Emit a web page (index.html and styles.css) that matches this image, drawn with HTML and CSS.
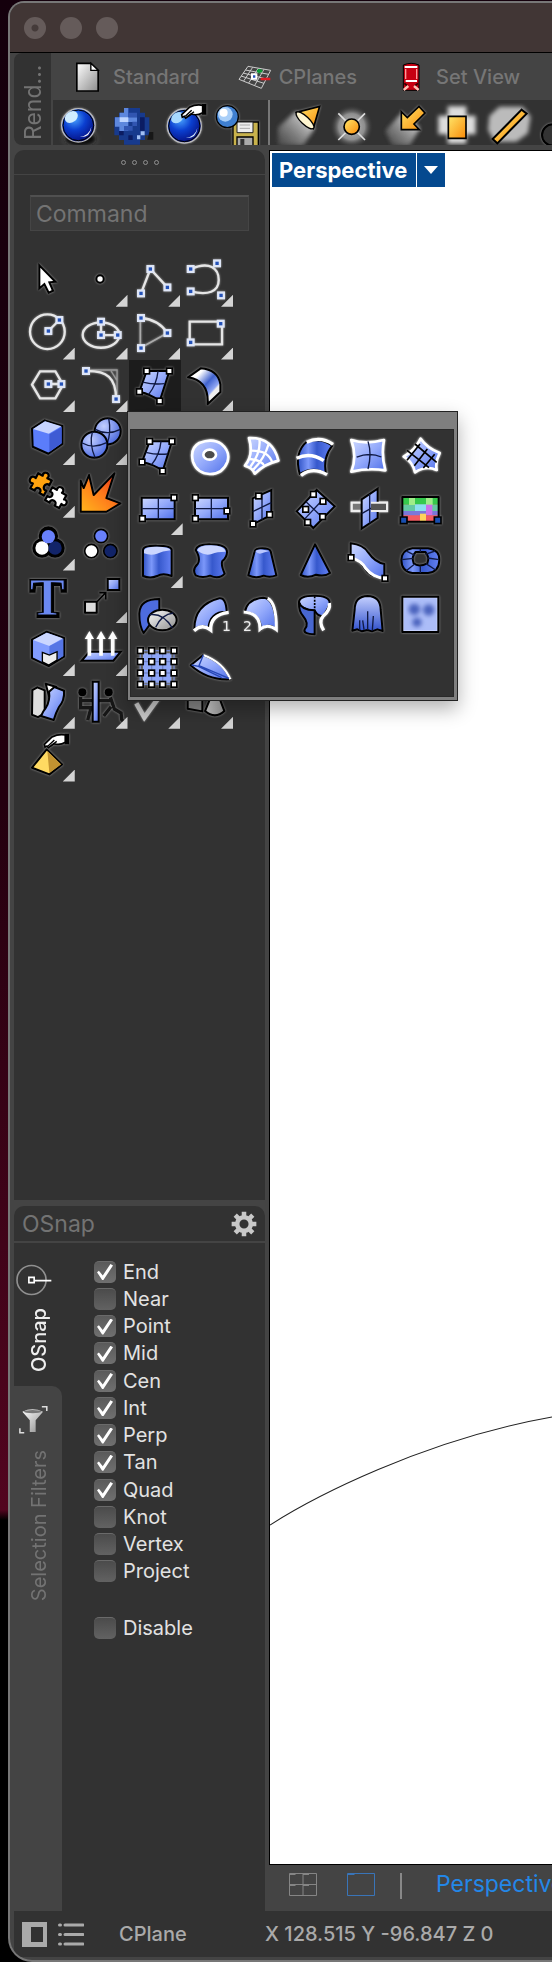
FILE: index.html
```html
<!DOCTYPE html>
<html lang="en">
<head>
<meta charset="utf-8">
<title>Perspective</title>
<link rel="stylesheet" href="styles.css">
</head>
<body>
<svg class="defs" aria-hidden="true">
<defs>
<linearGradient id="bl" x1="0" y1="0" x2="1" y2="1"><stop offset="0" stop-color="#cdd8ff"/><stop offset=".5" stop-color="#93a9fb"/><stop offset="1" stop-color="#4f6fe8"/></linearGradient>
<linearGradient id="side" x1="0" y1="0" x2="1" y2="0"><stop offset="0" stop-color="#2f52c4"/><stop offset=".3" stop-color="#7c98fa"/><stop offset=".55" stop-color="#3658cc"/><stop offset="1" stop-color="#6481f4"/></linearGradient>
<linearGradient id="down" x1="0" y1="0" x2="0" y2="1"><stop offset="0" stop-color="#c6d1ff"/><stop offset="1" stop-color="#2f50cc"/></linearGradient>
<linearGradient id="shell" x1="0" y1="0" x2="1" y2="1"><stop offset=".25" stop-color="#fff"/><stop offset=".5" stop-color="#3f62cf"/><stop offset=".68" stop-color="#8fa6f4"/><stop offset=".72" stop-color="#eee"/></linearGradient>
<linearGradient id="gr" x1="0" y1="0" x2="1" y2="1"><stop offset="0" stop-color="#fff"/><stop offset="1" stop-color="#8c8c8c"/></linearGradient>
<linearGradient id="or" x1="0" y1="0" x2="1" y2="1"><stop offset="0" stop-color="#ffe66a"/><stop offset="1" stop-color="#f98a08"/></linearGradient>
<linearGradient id="fire" x1="0" y1="1" x2="1" y2="0"><stop offset="0" stop-color="#ffb61c"/><stop offset=".5" stop-color="#ff7c1c"/><stop offset="1" stop-color="#e52c1c"/></linearGradient>
<radialGradient id="ball" cx=".38" cy=".3" r=".75"><stop offset="0" stop-color="#4aa4ff"/><stop offset=".45" stop-color="#0b3fd0"/><stop offset="1" stop-color="#050a78"/></radialGradient>
<radialGradient id="sph" cx=".35" cy=".3" r=".8"><stop offset="0" stop-color="#c2cfff"/><stop offset="1" stop-color="#4565e2"/></radialGradient>
<radialGradient id="lit"><stop offset="0" stop-color="#fff"/><stop offset=".6" stop-color="#b5b5b5"/><stop offset="1" stop-color="#323232" stop-opacity="0"/></radialGradient>
<linearGradient id="beam" x1="1" y1="0" x2="0" y2="1"><stop offset="0" stop-color="#fff"/><stop offset="1" stop-color="#444" stop-opacity=".3"/></linearGradient>
<filter id="soft"><feGaussianBlur stdDeviation="6"/></filter>
<g id="h"><path fill="#dfe6f7" d="M-12-12h24v24h-24z"/><path fill="#2452b8" d="M-5-5H5V5H-5z"/></g>
<g id="b"><path fill="#000" d="M-11-11h22v22h-22z"/><path fill="#fff" d="M-6-6H6V6H-6z"/></g>
<g id="hand"><path d="M-39 14L-16-8Q4-18 24-14V8Q6 18-10 12L-27 24l-4-5-6 3z" fill="#fff" stroke="#000" stroke-width="5"/><path d="M-28 19L-9 1M-20 19L-2 5M24-16h9v28h-9z" stroke="#000" stroke-width="4"/></g>
<path id="puz" d="M-22-20H-8C-14-36 14-36 8-20H22V-7C37-13 37 13 22 7V20H8C12 6-12 6-8 20H-22V7C-8 11-8-11-22-7Z"/>
</defs>
</svg>
<div class="window">
<header class="titlebar"><span class="light close"></span><span class="light"></span><span class="light"></span></header>
<div class="toolbars">
<button class="render-tab">Rend...</button>
<div class="bars">
<nav class="tabs">
<button class="tab"><svg class="doc" viewBox="226 170 74 96"><path d="M231 177h42l22 21v62h-64z" fill="url(#gr)" stroke="#000" stroke-width="5"/><path d="M273 177v21h22z" fill="#fff" stroke="#000" stroke-width="4"/></svg>Standard</button>
<button class="tab"><svg class="plane" viewBox="708 190 102 78"><path d="M738 197L806 209 778 263 711 236Z" fill="#444"/><path d="M738 197L806 209 778 263 711 236ZM752 200L725 241M769 203L740 247M786 206L758 254M730 208L800 221M723 217L793 235M717 226L786 248" fill="none" stroke="#ccc" stroke-width="3"/><path d="M765 211h16M772 205v13" stroke="#0a9a35" stroke-width="7"/><path d="M776 235h29" stroke="#e01b24" stroke-width="8"/><path d="M747 218h19v19h-19z" fill="#fff"/><path d="M753 224h7v7h-7z" fill="#2452b8"/></svg>CPlanes</button>
<button class="tab"><svg class="car" viewBox="92 174 60 90"><path d="M99 183q23-10 47 0v76H99z" fill="#c70012" stroke="#000" stroke-width="3"/><path d="M103 189h38M106 231h34" stroke="#fff" stroke-width="6"/><path d="M106 195v30M139 195v30" stroke="#f99" stroke-width="4"/><path d="M102 238l10 8M143 238l-10 8" stroke="#300" stroke-width="5"/><path d="M100 258l14-12M145 258l-14-12" stroke="#ffc2b5" stroke-width="7"/></svg>Set View</button>
<span class="more">⋮</span>
</nav>
<div class="tools">
<button class="tool" aria-label="Render"><svg viewBox="159 297 159 135"><ellipse cx="241" cy="414" rx="50" ry="25" fill="#080808" filter="url(#soft)"/><circle cx="235" cy="373" r="50" fill="url(#ball)" stroke="#bbb" stroke-width="4"/><circle cx="235" cy="373" r="46" fill="none" stroke="#000" stroke-width="3"/><ellipse cx="214" cy="348" rx="21" ry="16" fill="#d0edff" transform="rotate(-35 214 348)"/><path d="M240 408q28-5 34-30-2 31-34 30z" fill="#fff"/></svg></button>
<button class="tool" aria-label="Preview"><svg class="plain" viewBox="318 297 159 135"><path d="M372 321h48v14h15v14h13v54h-13v14h-15v14h-48v-14h-15v-14h-14v-54h14v-14h15z" fill="#173a8d"/><path d="M359 335h13v-14h13v28h26v14h-26v27h-27v-13h-13v-28h14z" fill="#5d87dd"/><path d="M359 349h26v14h-26z" fill="#bdd4ff"/><path d="M384 335h27v14h-27zM372 375h26v14h-26zM397 362h14v13h-14z" fill="#3155b1"/><path d="M420 349h14v40h-14zM385 403h13v14h-13zM357 390h14v13h-14z" fill="#0b1c62"/><path d="M411 403h10v12h-10zM422 391h12v12h-12z" fill="#a1bff3"/><path d="M448 393h12v23h-18z" fill="#171717"/></svg></button>
<button class="tool" aria-label="Render window"><svg viewBox="477 297 159 135"><circle cx="553" cy="375" r="51" fill="url(#ball)" stroke="#bbb" stroke-width="4"/><circle cx="553" cy="375" r="47" fill="none" stroke="#000" stroke-width="3"/><ellipse cx="532" cy="350" rx="20" ry="15" fill="#a8d9ff" transform="rotate(-35 532 350)"/><path d="M558 411q28-5 34-30-2 31-34 30z" fill="#d9efff"/><use href="#hand" x="584" y="327"/></svg></button>
<button class="tool" aria-label="Save render"><svg viewBox="636 297 159 135"><path d="M699 363h76v75h-76z" fill="#c8b24c" stroke="#000" stroke-width="4"/><path d="M711 363h48v32h-48z" fill="#eee" stroke="#222" stroke-width="3"/><path d="M719 372h31M719 382h31" stroke="#aaa" stroke-width="3"/><path d="M711 408h48v30h-48z" fill="#aaa" stroke="#000" stroke-width="4"/><path d="M721 414h12v20h-12z" fill="#333"/><circle cx="682" cy="347" r="33" fill="#3f7fd0" stroke="#000" stroke-width="4"/><circle cx="676" cy="340" r="22" fill="#a9cff8"/><circle cx="671" cy="335" r="12" fill="#fff"/></svg></button>
<span class="sep"></span>
<button class="tool" aria-label="Spotlight"><svg viewBox="-6 297 159 135"><path d="M60 333L114 382 80 432H8V380Z" fill="url(#beam)" filter="url(#soft)"/><path d="M61 334L131 316 112 382Z" fill="url(#or)" stroke="#000" stroke-width="5"/><ellipse cx="87" cy="358" rx="35" ry="12" transform="rotate(43 87 358)" fill="#fff6d0" stroke="#000" stroke-width="4"/></svg></button>
<button class="tool" aria-label="Point light"><svg class="plain" viewBox="153 297 159 135"><circle cx="227" cy="377" r="65" fill="url(#lit)" opacity=".7"/><path d="M187 337l80 80M267 337l-80 80" stroke="#ddd" stroke-width="5"/><circle cx="227" cy="377" r="23" fill="url(#or)" stroke="#000" stroke-width="5"/></svg></button>
<button class="tool" aria-label="Directional light"><svg viewBox="312 297 159 135"><path d="M376 340L330 390 350 432H400L430 380Z" fill="url(#beam)" filter="url(#soft)"/><path d="M376 332v54h54l-16-17 33-33-18-20-35 34z" fill="url(#or)" stroke="#000" stroke-width="5"/></svg></button>
<button class="tool" aria-label="Rectangular light"><svg class="plain" viewBox="471 297 159 135"><path d="M515 316h56v112h-56zM487 344h112v56H487z" fill="#ddd" filter="url(#soft)"/><path d="M517 346h53v66h-53z" fill="url(#or)" stroke="#000" stroke-width="5"/></svg></button>
<button class="tool" aria-label="Linear light"><svg class="plain" viewBox="630 297 159 135"><path d="M640 345l30-28h70l24 30-8 50-35 25h-65l-20-35z" fill="#bbb" filter="url(#soft)"/><path d="M737 326l15 12-88 89-14-13z" fill="url(#or)" stroke="#000" stroke-width="6"/></svg></button>
<button class="tool" aria-label="Environment"><svg viewBox="789 297 159 135"><circle cx="830" cy="402" r="32" fill="#333" stroke="#000" stroke-width="6"/></svg></button>
</div>
</div>
</div>
<main class="main">
<aside class="sidebar">
<section class="toolbox">
<div class="grip"><i></i><i></i><i></i><i></i></div>
<input class="command" type="text" placeholder="Command" aria-label="Command">
<div class="palette">
<button class="cell" aria-label="Select"><svg viewBox="69 42 158 158"><path d="M118 76v69l15-13 13 26 13-6-11-25 18-2z" fill="#fff" stroke="#000" stroke-width="6"/></svg></button>
<button class="cell more-tools" aria-label="Point"><svg viewBox="227 42 158 158"><circle cx="299" cy="117" r="11" fill="#fff" stroke="#000" stroke-width="6"/></svg></button>
<button class="cell more-tools" aria-label="Polyline"><svg viewBox="385 42 158 158"><path class="line" d="M421 160L449 87 500 142"/><use href="#h" x="421" y="160"/><use href="#h" x="449" y="87"/><use href="#h" x="500" y="142"/></svg></button>
<button class="cell more-tools" aria-label="Curve"><svg viewBox="544 42 158 158"><path class="line" d="M573 87C630 62 657 85 657 120S625 167 573 154"/><use href="#h" x="573" y="87"/><use href="#h" x="652" y="70"/><use href="#h" x="573" y="154"/><use href="#h" x="664" y="166"/></svg></button>
<button class="cell more-tools" aria-label="Circle"><svg viewBox="69 200 158 158"><circle class="line" cx="142" cy="274" r="52"/><path class="line" d="M145 272l33-33"/><use href="#h" x="145" y="272"/><use href="#h" x="178" y="239"/></svg></button>
<button class="cell more-tools" aria-label="Ellipse"><svg viewBox="227 200 158 158"><ellipse class="line" cx="302" cy="284" rx="55" ry="38"/><path class="line" d="M302 244v40h50"/><use href="#h" x="302" y="244"/><use href="#h" x="302" y="284"/><use href="#h" x="352" y="284"/></svg></button>
<button class="cell more-tools" aria-label="Arc"><svg viewBox="385 200 158 158"><path d="M500 278l-81 45v-90" fill="none" stroke="#aaa" stroke-width="5"/><path class="line" d="M421 233Q474 238 500 278"/><use href="#h" x="421" y="233"/><use href="#h" x="421" y="323"/><use href="#h" x="500" y="278"/></svg></button>
<button class="cell more-tools" aria-label="Rectangle"><svg viewBox="544 200 158 158"><path class="line" d="M570 244h97v68h-97z"/><use href="#h" x="663" y="250"/><use href="#h" x="573" y="306"/></svg></button>
<button class="cell more-tools" aria-label="Polygon"><svg viewBox="69 358 158 158"><path class="line" d="M96 432l24-40h46l23 40-23 41h-46zM145 430h39"/><use href="#h" x="145" y="430"/><use href="#h" x="184" y="430"/></svg></button>
<button class="cell more-tools" aria-label="Fillet"><svg viewBox="227 358 158 158"><path d="M257 388h93v87M332 391l17 27" fill="none" stroke="#999" stroke-width="4"/><path class="line" d="M257 391C320 390 347 410 347 475"/><use href="#h" x="257" y="391"/><use href="#h" x="347" y="475"/></svg></button>
<button class="cell active" aria-label="Surface"><svg viewBox="385 358 158 158"><path class="blue" d="M438 391h68l-29 90q-25-20-61-28z"/><path class="thin" d="M472 391q-4 40-28 70M426 424q30 8 66 5"/><use href="#b" x="438" y="391"/><use href="#b" x="506" y="391"/><use href="#b" x="477" y="481"/><use href="#b" x="416" y="453"/></svg></button>
<button class="cell more-tools" aria-label="Extrude surface"><svg viewBox="544 358 158 158"><path class="k" fill="url(#shell)" d="M565 410l38-27q52 4 59 48v23l-38 36q4-70-59-80z"/></svg></button>
<button class="cell more-tools" aria-label="Box"><svg viewBox="69 516 158 158"><path class="k" fill="#5b7dfa" d="M96 566l38-25 53 17v54l-42 29-47-21z"/><path d="M99 567l36-23 49 15-38 22z" fill="#c7d4ff"/><path d="M148 583l37-22v48l-37 27z" fill="#3e5bd4"/></svg></button>
<button class="cell more-tools" aria-label="Solids"><svg viewBox="227 516 158 158"><circle cx="322" cy="574" r="39" fill="url(#sph)" class="k"/><path class="thin" d="M285 568q35 20 75 0M325 535q8 40-5 78"/><circle cx="282" cy="614" r="39" fill="url(#sph)" class="k"/><path class="thin" d="M244 608q35 20 75 0M276 576q-10 35 8 76"/></svg></button>
<button class="cell more-tools row-start" aria-label="Explode blocks"><svg viewBox="69 675 158 158"><use href="#puz" class="k" fill="#ffa30f" transform="translate(123 733) rotate(-62) scale(1.15)"/><use href="#puz" class="k" fill="#fff" transform="translate(167 773) rotate(30) scale(1.1)"/></svg></button>
<button class="cell" aria-label="Explode"><svg viewBox="227 675 158 158"><path class="k" fill="url(#fire)" d="M241 722l9 22 16-39 14 60 62-65-24 74 42 16-42 25h-77z"/></svg></button>
<button class="cell more-tools row-start" aria-label="Union"><svg viewBox="69 53 158 158"><g stroke="#000" stroke-width="18"><circle cx="145" cy="107" r="20"/><circle cx="126" cy="143" r="20"/><circle cx="165" cy="143" r="20"/></g><circle cx="126" cy="143" r="20" fill="#fff"/><circle cx="165" cy="143" r="20" fill="#122469"/><circle cx="145" cy="109" r="20" fill="#6880fb"/></svg></button>
<button class="cell" aria-label="Group"><svg viewBox="227 53 158 158"><g stroke="#000" stroke-width="5"><circle cx="302" cy="107" r="20" fill="#6880fb"/><circle cx="273" cy="152" r="20" fill="#fff"/><circle cx="330" cy="152" r="20" fill="#122469"/></g></svg></button>
<button class="cell row-start" aria-label="Text"><svg viewBox="69 211 158 158"><text class="glyph back" x="144" y="345">T</text><text class="glyph" x="142" y="343">T</text></svg></button>
<button class="cell more-tools" aria-label="Scale"><svg viewBox="227 211 158 158"><path class="k" fill="#ddd" d="M254 303h35v33h-35z"/><path class="blue" d="M322 235h35v33h-35z"/><path d="M290 303l25-26M297 276h19v20" fill="none" stroke="#000" stroke-width="5"/></svg></button>
<button class="cell more-tools row-start" aria-label="Solid edit"><svg viewBox="69 370 158 158"><path class="k" fill="#829dff" d="M96 420l44-24 52 19v56l-46 28-50-24z"/><path d="M99 421l41-22 48 17-40 23z" fill="#cbd6ff"/><path d="M148 439l42-22v52l-42 27z" fill="#5575e5"/><path d="M127 458l21 8 23-10v25l-25 15-19-10z" fill="#eee" stroke="#000" stroke-width="4"/></svg></button>
<button class="cell more-tools" aria-label="Project"><svg viewBox="227 370 158 158"><path class="blue" d="M244 483l23-27h94l-22 27z"/><path d="M267 468v-56M302 468v-56M337 468v-56" stroke="#fff" stroke-width="11"/><path d="M267 394l14 24h-28zM302 394l14 24h-28zM337 394l14 24h-28z" fill="#fff"/></svg></button>
<button class="cell more-tools row-start" aria-label="Shell"><svg viewBox="69 528 158 158"><path class="k" fill="#fff" d="M137 551l32 10-22 28z"/><path class="k" fill="#ddd" d="M97 570l15-8 22 9v68l-20 12-18-7z"/><path class="k" fill="url(#bl)" d="M147 575l16-14 29 11q2 30-16 50-8 14-15 38l-38-12q5-14 14-24 14-22 10-49z"/></svg></button>
<button class="cell more-tools" aria-label="Mirror"><svg viewBox="227 528 158 158"><path d="M241 590v33h31l-10 37M244 602h90M330 592l12 35 20 12 2 20 10 10M332 620l-22 28" fill="none" stroke="#161616" stroke-width="10"/><circle cx="246" cy="577" r="12"/><circle cx="325" cy="577" r="12"/><path class="blue" d="M277 545h18v120h-18z"/></svg></button>
<button class="cell more-tools" aria-label="Check"><svg viewBox="385 528 158 158"><path d="M407 610l24 42 48-66" fill="none" stroke="#ccc" stroke-width="14"/></svg></button>
<button class="cell more-tools" aria-label="Primitives"><svg viewBox="544 528 158 158"><path class="k" fill="#888" d="M564 580h44v54l-44-8z"/><path class="k" fill="url(#gr)" d="M646 560l28 73q-28 26-58 0z"/></svg></button>
<button class="cell more-tools row-start" aria-label="Render options"><svg viewBox="69 686 158 158"><path class="k" fill="#ffda62" d="M140 747l46 45-38 30-52-20z"/><path d="M142 752l41 40-35 26z" fill="#c29331"/><use href="#hand" x="172" y="718"/></svg></button>
<div class="popup">
<div class="flyout">
<button class="cell" aria-label="Corner points"><svg viewBox="33 270 158 158"><path class="blue" d="M89 304h67l-28 89q-25-20-62-27z"/><path class="thin" d="M123 304q-4 40-28 70M77 337q30 8 66 5"/><use href="#b" x="89" y="304"/><use href="#b" x="156" y="304"/><use href="#b" x="128" y="393"/><use href="#b" x="66" y="366"/></svg></button>
<button class="cell" aria-label="Patch"><svg class="glow" viewBox="191 270 158 158"><path class="wh" fill="url(#bl)" d="M237 309q40-16 66 3 28 23 18 54-15 37-53 36-38-2-50-37-10-40 19-56z"/><ellipse cx="268" cy="344" rx="19" ry="15" fill="#4b4b4b" stroke="#fff" stroke-width="8"/></svg></button>
<button class="cell" aria-label="Curve network"><svg class="glow" viewBox="349 270 158 158"><path class="wh" fill="url(#bl)" d="M388 294q72-2 88 68-40 9-71 39-5-17-29-24 27-32 12-83z"/><path d="M396 332q52 0 62 37M391 357q39 4 44 24M419 294q6 43-27 86M447 312q-13 44-46 77" fill="none" stroke="#fff" stroke-width="7"/></svg></button>
<button class="cell" aria-label="Loft"><svg class="glow" viewBox="-3 90 158 158"><path class="k" fill="url(#side)" d="M50 125q-38 32-21 97 43-26 79 0-10-50 19-85-34-25-77-12z"/><path d="M50 127q40-20 79 6M20 175q40-20 81 7M33 226q35-27 78-2" fill="none" stroke="#fff" stroke-width="10"/></svg></button>
<button class="cell" aria-label="Edge curves"><svg class="glow" viewBox="155 90 158 158"><path class="wh" fill="url(#bl)" d="M183 120q43 14 98 0-9 45 4 91-50-8-102 4 18-43 0-95z"/><path class="thin" d="M233 124q12 37 0 83M199 171q40-15 74 0"/></svg></button>
<button class="cell" aria-label="Drape network"><svg class="glow" viewBox="313 90 158 158"><path class="wh" fill="url(#bl)" d="M393 116q19 28 57 43-14 26-9 51-32-15-65 7-7-32-34-47 35-19 51-54z"/><path d="M352 151l66 52M376 132l65 55M391 132l-39 49M413 147l-39 50M435 163l-34 41" stroke="#000" stroke-width="5"/></svg></button>
<button class="cell more-tools" aria-label="Rectangular plane"><svg viewBox="33 428 158 158"><path class="blue" d="M65 472h99v65H65z"/><path class="thin" d="M115 472v65M65 505h99"/><use href="#b" x="162" y="472"/><use href="#b" x="67" y="535"/></svg></button>
<button class="cell" aria-label="Three point plane"><svg viewBox="191 428 158 158"><path class="blue" d="M224 472h99v65h-99z"/><path class="thin" d="M273 472v65M224 505h99"/><use href="#b" x="225" y="472"/><use href="#b" x="225" y="535"/><use href="#b" x="320" y="512"/></svg></button>
<button class="cell" aria-label="Vertical plane"><svg viewBox="349 428 158 158"><path class="blue" d="M399 474l56-25v75l-56 28z"/><path class="thin" d="M427 463v75M399 514l56-27"/><use href="#b" x="417" y="467"/><use href="#b" x="400" y="551"/><use href="#b" x="450" y="523"/></svg></button>
<button class="cell" aria-label="Plane through points"><svg viewBox="-3 248 158 158"><path class="blue" d="M20 333l60-64 54 49-64 65z"/><path class="thin" d="M48 304l54 52M100 296l-55 59"/><use href="#b" x="70" y="282"/><use href="#b" x="99" y="303"/><use href="#b" x="47" y="327"/><use href="#b" x="98" y="349"/><use href="#b" x="53" y="366"/></svg></button>
<button class="cell" aria-label="Cutting plane"><svg viewBox="155 248 158 158"><path d="M184 307h106v25H184z" fill="#777" stroke="#eee" stroke-width="7"/><path class="blue" d="M214 297l48-32v88l-48 32z"/><path class="thin" d="M238 281v88M214 340l48-27"/><path d="M242 307h48v25h-48" fill="#555" stroke="#eee" stroke-width="6"/></svg></button>
<button class="cell" aria-label="Picture"><svg viewBox="313 248 158 158"><path d="M338 292h109v70H338z" fill="#f25b61"/><path d="M338 292h109v21H338z" fill="#35c94c"/><path d="M338 313h109v19H338z" fill="#64c9a3"/><path d="M338 332h109v13H338z" fill="#7b78d9"/><path d="M358 292h18v22h-18zM409 292h20v22h-20z" fill="#a0ed89"/><path d="M376 312h34v20h-34z" fill="#8ce0f1"/><path d="M409 313h19v31h-19z" fill="#cb70e8"/><path d="M391 340h18v22h-18z" fill="#ffd45c"/><path class="k" fill="none" d="M338 290h109v74H338z"/><path d="M332 350h20v20h-20zM434 350h20v20h-20z" fill="#194fb0" stroke="#000" stroke-width="5"/></svg></button>
<button class="cell more-tools" aria-label="Extrude straight"><svg viewBox="33 46 158 158"><path class="k" fill="url(#side)" d="M69 91q0-14 41-13 45 0 45 13v78q-26-10-44 0-20 9-42 0z"/><path d="M72 92q2-11 39-11t41 11q-25 3-41 10-18 7-39-1z" fill="#cbd6ff"/></svg></button>
<button class="cell" aria-label="Extrude along curve"><svg viewBox="191 46 158 158"><path class="k" fill="url(#side)" d="M226 91q5-18 44-17 50 0 50 23 0 16-14 27-5 11 7 38-16 18-44 6-23 8-43-1-12-17 6-34 10-16-6-42z"/><path d="M230 92q7-15 42-15 41 1 44 19-26 0-42 7-21 7-44-11z" fill="#cbd6ff"/></svg></button>
<button class="cell" aria-label="Extrude tapered"><svg viewBox="349 46 158 158"><path class="k" fill="url(#side)" d="M405 95q2-9 23-9t25 9l17 72q-20 8-38 1-22 10-46-1z"/><path d="M407 94q10-9 43 0-17 4-24 7-10 4-19-7z" fill="#b9c7ff"/></svg></button>
<button class="cell" aria-label="Extrude to point"><svg viewBox="-3 406 158 158"><path class="k" fill="url(#side)" d="M75 434l45 86q-16 12-42 5-24 12-46 1z"/></svg></button>
<button class="cell" aria-label="Ribbon"><svg viewBox="155 406 158 158"><path class="k" fill="url(#bl)" d="M181 431q38 4 53 28 20 29 48 34v42q-42 1-60-30-14-25-41-31z"/><path d="M182 474q31 9 45 33 20 26 56 29" fill="none" stroke="#fff" stroke-width="9"/><use href="#b" x="182" y="474"/><use href="#b" x="284" y="536"/></svg></button>
<button class="cell" aria-label="Revolve"><svg viewBox="313 406 158 158"><path class="k" fill="url(#side)" fill-rule="evenodd" d="M368 446h47q35 5 34 35-1 36-34 39h-47q-32-4-33-39 1-30 33-35zm10 11q-14 15-6 34 15 13 41 0 8-18-6-34z"/><path class="thin" d="M392 447v10M392 498v22M336 480l35-4M414 475l34 5M352 455l24 12M407 464l29-10M350 513l25-20M409 492l29 19"/></svg></button>
<button class="cell" aria-label="Rail revolve"><svg viewBox="33 204 158 158"><path class="k" fill="#4d6cdf" d="M118 237v38l-47 64q-14-23-13-60 2-42 60-42z"/><ellipse class="k" cx="127" cy="300" rx="43" ry="31" fill="url(#gr)"/><path class="thin" d="M90 284q40-5 67 40M160 279q-35 4-53 43"/></svg></button>
<button class="cell" aria-label="Sweep one rail"><svg viewBox="191 204 158 158"><path class="k" fill="url(#bl)" d="M222 327q0-73 75-92 20-3 22 40-50-1-55 50-18-13-42 2z"/><path d="M221 332q25-22 50-2-2-46 54-53" fill="none" stroke="#fff" stroke-width="10"/><text class="num" x="305" y="333">1</text></svg></button>
<button class="cell" aria-label="Sweep two rails"><svg viewBox="349 204 158 158"><path class="k" fill="url(#bl)" d="M375 277q8-40 56-44 37 2 39 96-24-23-46 0-1-49-49-52z"/><path d="M372 276q50 3 49 52 23-19 49 1 1-80-26-94" fill="none" stroke="#fff" stroke-width="9"/><text class="num" x="370" y="333">2</text></svg></button>
<button class="cell" aria-label="Revolve section"><svg viewBox="-3 84 158 158"><path class="k" fill="url(#bl)" d="M27 127q0-20 45-20t47 20q-2 18-20 40-14 4-24-14-45-5-48-26z"/><path class="k" fill="#4867d0" d="M27 127q7 23 47 24v72q-36-1-30-15 15-16-5-40-13-14-12-41z"/><path d="M74 109v42" stroke="#000" stroke-width="5" stroke-dasharray="6 4"/><path d="M118 129q4 20-19 40-14 16 2 42" fill="none" stroke="#fff" stroke-width="10"/></svg></button>
<button class="cell" aria-label="Drape"><svg viewBox="155 84 158 158"><path class="k" fill="url(#down)" d="M193 149q0-40 39-41 38 1 39 41l6 64-16-5-16 6-14-4-16 4-14-6-15 4z"/><path class="thin" d="M208 211v-30M221 209l-4-28M232 209v-55M246 211l3-43"/></svg></button>
<button class="cell" aria-label="Heightfield"><svg viewBox="313 84 158 158"><path class="k" fill="#ccd7ff" d="M338 110h108v106H338z"/><path d="M343 115h98v96h-98z" fill="#acbdf8"/><g fill="#4b64bd" filter="url(#soft)"><circle cx="374" cy="148" r="17"/><circle cx="417" cy="150" r="17"/><circle cx="382" cy="187" r="14"/></g></svg></button>
<button class="cell" aria-label="Point grid"><svg viewBox="33 362 158 158"><path d="M69 399h85v88H69z" fill="#8da5f6"/><path d="M61 391h101v101H61zM95 391v101M128 391v101M61 424h101M61 458h101" fill="none" stroke="#7184c6" stroke-width="4"/><g id="dots"><use href="#b" x="61" y="391"/><use href="#b" x="95" y="391"/><use href="#b" x="128" y="391"/><use href="#b" x="162" y="391"/></g><use href="#dots" y="33"/><use href="#dots" y="67"/><use href="#dots" y="101"/></svg></button>
<button class="cell" aria-label="Developable surface"><svg viewBox="191 362 158 158"><path class="k" fill="url(#bl)" d="M211 435l38-31q60 22 81 73-67 4-119-42z"/><path d="M249 404q60 22 81 73" fill="none" stroke="#fff" stroke-width="7"/><path d="M249 404l-13 32 90 38M214 434l20 4 70 34" fill="none" stroke="#2848b6" stroke-width="4"/></svg></button>
</div>
</div>
</div>
</section>
<section class="osnap">
<div class="osnap-head"><h2>OSnap</h2><button class="gear" aria-label="Settings"><svg viewBox="-40 -40 80 80"><circle r="21" fill="none" stroke="#c8c8c8" stroke-width="14"/><path d="M0-38v14M0 38V24M-38 0h14M38 0H24M-27-27l10 10M27 27L17 17M-27 27l10-10M27-27L17-17" stroke="#c8c8c8" stroke-width="14"/></svg></button></div>
<div class="osnap-body">
<div class="side-tabs">
<button class="side-tab on"><svg viewBox="50 248 112 100"><circle cx="100" cy="298" r="44" fill="none" stroke="#909090" stroke-width="5"/><path d="M92 290h16v16H92zM110 300h50" fill="none" stroke="#fff" stroke-width="5"/></svg><span>OSnap</span></button>
<button class="side-tab off"><svg viewBox="50 10 112 110"><path d="M133 22h16v14M62 92v14h14" fill="none" stroke="#ddd" stroke-width="5"/><path d="M70 38q33-15 67 0l-24 28v38H94V66z" fill="url(#gr)"/><ellipse cx="103" cy="38" rx="28" ry="5" fill="#777"/></svg><span>Selection Filters</span></button>
</div>
<div class="snaps">
<div class="snap-list">
<label><input type="checkbox" checked>End</label>
<label><input type="checkbox">Near</label>
<label><input type="checkbox" checked>Point</label>
<label><input type="checkbox" checked>Mid</label>
<label><input type="checkbox" checked>Cen</label>
<label><input type="checkbox" checked>Int</label>
<label><input type="checkbox" checked>Perp</label>
<label><input type="checkbox" checked>Tan</label>
<label><input type="checkbox" checked>Quad</label>
<label><input type="checkbox">Knot</label>
<label><input type="checkbox">Vertex</label>
<label><input type="checkbox">Project</label>
</div>
<label><input type="checkbox">Disable</label>
</div>
</div>
</section>
</aside>
<section class="view">
<div class="canvas">
<div class="view-title"><button class="view-name">Perspective</button><button class="view-menu" aria-label="Viewport menu"></button></div>
<svg class="arc" viewBox="0 0 281 110" preserveAspectRatio="none"><path d="M0 109C42 82 152 24 281 1" fill="none" stroke="#222"/></svg>
</div>
<div class="view-tabs">
<button aria-label="Four views"><svg viewBox="0 0 28 24"><path d="M.5.5h27v22H.5zM14 .5v22M.5 11.5h27M.5 1.500h6M14 1.500h6M.5 12.500h6M14 12.500h6" fill="none" stroke="#858585"/></svg></button>
<button aria-label="Single view"><svg viewBox="0 0 28 24"><path d="M.5.5h27v22H.5zM.5 1.500h7" fill="none" stroke="#3974b8"/></svg></button>
<span class="bar"></span>
<button class="view-link">Perspective</button>
</div>
</section>
</main>
<footer class="status">
<button aria-label="Toggle sidebar"><svg class="panel-ico" viewBox="0 0 25 25"><path d="M0 0h25v25H0zM9 5v15h12V5z" fill="#aaa" fill-rule="evenodd"/></svg></button>
<button aria-label="List"><svg class="list-ico" viewBox="0 0 26 25"><path d="M7 3h18M7 12.500h18M7 22h18M1.500 3h1M1.500 12.500h1M1.500 22h1" stroke="#aaa" stroke-width="3" stroke-linecap="round"/></svg></button>
<span class="cplane">CPlane</span><span class="coords">X 128.515 Y -96.847 Z 0</span>
</footer>
</div>
</body>
</html>
```
FILE: styles.css
```css
* { box-sizing: border-box; }
body {
  margin: 0;
  min-height: 100vh;
  display: flex;
  padding: 1px 0 0 8px;
  background: linear-gradient(#14000c, #24000f 800px, #52051f 1510px, #000 1520px);
  font-family: Inter, "Liberation Sans", sans-serif;
  font-size: 20px;
  color: #e2e2e2;
  overflow-x: hidden;
}
button { border: 0; padding: 0; margin: 0; background: none; font: inherit; color: inherit; }
svg { display: block; }
.defs { position: absolute; width: 0; height: 0; }
.window {
  flex: 1;
  min-width: 0;
  display: flex;
  flex-direction: column;
  border: 2px solid #777;
  border-right: 0;
  border-radius: 16px 0 0 24px;
  background: #444;
  overflow: hidden;
  padding-bottom: 3px;
}
.titlebar {
  height: 50px;
  display: flex;
  gap: 14px;
  align-items: center;
  padding-left: 14px;
  background: #413635;
  border-bottom: 1px solid #000;
}
.light { width: 22px; height: 22px; border-radius: 50%; background: #655b5a; }
.light.close { background: radial-gradient(circle, #453b3a 3px, #655b5a 4px); }
.toolbars { display: flex; height: 97px; padding-left: 4px; gap: 2px; }
.render-tab {
  flex: none;
  width: 37px;
  height: 92px;
  writing-mode: vertical-rl;
  transform: rotate(180deg);
  background: #323232;
  border-radius: 0 8px 8px 0;
  color: #737373;
  font-size: 23px;
  text-align: left;
  padding-top: 5px;
}
.bars { flex: 1; min-width: 0; height: 92px; overflow: hidden; }
.tabs { display: flex; align-items: center; height: 47px; padding-left: 22px; color: #767676; font-weight: 500; }
.tab { flex: none; display: flex; align-items: center; white-space: nowrap; margin-right: 38px; }
.doc { width: 25px; height: 32px; margin-right: 13px; }
.plane { width: 34px; height: 26px; margin-right: 7px; }
.car { width: 20px; height: 30px; margin: 0 15px 0 6px; }
.more { color: #222; font-size: 22px; }
.tab:nth-child(3) { margin-right: 28px; }
.tools { display: flex; height: 45px; background: #323232; }
.tool { flex: none; width: 53px; height: 45px; }
.tool svg { width: 100%; height: 100%; }
.sep { flex: none; width: 2px; margin: 0 4px 0 3px; background: #777; }
.tool svg, .cell svg { filter: drop-shadow(0 0 1px #999); overflow: visible; }
.tool svg.plain { filter: none; }
.main { flex: 1; display: flex; min-height: 0; }
.sidebar { flex: none; width: 255px; padding-left: 4px; display: flex; flex-direction: column; gap: 6px; position: relative; z-index: 1; }
.toolbox { flex: 1; background: #323232; border-radius: 10px 10px 0 0; }
.grip { height: 25px; display: flex; gap: 6px; justify-content: center; align-items: center; border-bottom: 1px solid #444; }
.grip i { width: 5px; height: 5px; border: 1px solid #909090; border-radius: 50%; }
.command {
  display: block;
  width: calc(100% - 32px);
  height: 36px;
  margin: 20px 16px 23px;
  padding: 0 5px;
  background: #3b3b3b;
  border: 1px solid #454545;
  border-top: 2px solid #505050;
  font: 23px Inter, sans-serif;
  color: #eee;
}
.command::placeholder { color: #737373; opacity: 1; }
.palette { position: relative; width: 211px; margin-left: 9px; display: grid; grid-template-columns: repeat(4, 1fr); }
.cell { display: block; position: relative; aspect-ratio: 1; }
.cell svg { width: 100%; height: 100%; }
.cell .glow { filter: drop-shadow(0 0 1px #eee); }
.row-start { grid-column: 1; }
.active { background: #1c1c1c; }
.more-tools::after {
  content: "";
  position: absolute;
  right: 1px;
  bottom: 0;
  width: 12px;
  height: 12px;
  clip-path: polygon(100% 0, 100% 100%, 0 100%);
  background: #d4d4d4;
}
.k { stroke: #000; stroke-width: 6px; stroke-linejoin: round; }
.wh { stroke: #fff; stroke-width: 8px; stroke-linejoin: round; }
.blue { fill: url(#bl); stroke: #000; stroke-width: 6px; }
.thin { fill: none; stroke: #101a44; stroke-width: 4px; }
.line { fill: none; stroke: #e6e6e6; stroke-width: 7px; }
.glyph { font: bold 158px "Liberation Serif", serif; text-anchor: middle; fill: #6b89f2; stroke: #000; stroke-width: 3px; }
.glyph.back { fill: #2c4cc0; stroke-width: 12px; }
.num { font: 42px "DejaVu Sans", sans-serif; fill: #eee; }
.popup {
  position: absolute;
  left: 104px;
  top: 157px;
  width: 331px;
  padding: 18px 4px 4px 3px;
  border: 1px solid #222;
  background: #7f7f7f;
  box-shadow: 0 8px 18px rgba(0, 0, 0, .3);
}
.flyout { display: grid; grid-template-columns: repeat(6, 1fr); padding: 0 6px 3px 0; background: #323232; outline: 1px solid #292929; }
.osnap { min-height: 705px; display: flex; flex-direction: column; background: #323232; border-radius: 10px 10px 0 0; }
.osnap-head { height: 37px; display: flex; justify-content: space-between; align-items: center; padding: 0 8px; border-bottom: 2px solid #444; }
.osnap-head h2 { margin: 0; font-size: 23px; font-weight: 400; color: #737373; }
.gear svg { width: 26px; height: 26px; }
.osnap-body { flex: 1; display: flex; }
.side-tabs { width: 48px; display: flex; flex-direction: column; background: #323232; }
.side-tab { display: flex; flex-direction: column; align-items: center; padding-left: 1px; }
.side-tab svg { width: 37px; height: 34px; margin-right: 10px; }
.side-tab span { writing-mode: vertical-rl; transform: rotate(180deg); }
.on { height: 143px; padding-top: 20px; gap: 11px; color: #eee; font-weight: 500; border-radius: 0 0 0 10px; clip-path: inset(0); background: radial-gradient(circle at 100% 0, #323232 100%, #444); }
.off { flex: 1; padding-top: 17px; gap: 13px; color: #737373; background: #444; border-radius: 0 10px 0 0; }
.snaps { padding: 15px 0 0 32px; }
.snap-list { height: 327px; display: grid; grid-template-rows: repeat(12, 1fr); margin-bottom: 29px; }
.snaps label { display: flex; align-items: center; gap: 7px; height: 27px; }
.snaps input {
  appearance: none;
  width: 22px;
  height: 22px;
  margin: 0;
  border-radius: 5px;
  background: linear-gradient(#4b4b4b, #626262);
  border-top: 1px solid #6a6a6a;
  display: grid;
  place-items: center;
}
.snaps input:checked { background: linear-gradient(#5a5a5a, #707070); }
.snaps input:checked::before {
  content: "";
  width: 16px;
  height: 16px;
  background: #fff;
  clip-path: polygon(0 52%, 12% 42%, 36% 72%, 84% 0, 100% 10%, 40% 100%, 32% 100%);
}
.view { flex: 1; min-width: 0; display: flex; flex-direction: column; }
.canvas { flex: 1; position: relative; margin-left: 4px; background: #fff; border: 1px solid #000; border-right: 0; overflow: hidden; }
.view-title { display: flex; gap: 1px; padding: 2px; height: 37px; font-weight: 700; font-size: 22px; color: #fff; }
.view-title button { height: 34px; background: #04498f; }
.view-name { padding: 0 9px 0 7px; }
.view-menu { width: 28px; display: grid; place-items: center; }
.view-menu::before { content: ""; border: 7px solid transparent; border-top: 8px solid #fff; border-bottom: 0; }
.arc { position: absolute; left: 0; bottom: 338px; width: 100%; height: 110px; }
.view-tabs { height: 46px; display: flex; align-items: flex-start; padding: 8px 0 0 24px; color: #2387e8; font-size: 23px; white-space: nowrap; overflow: hidden; }
.view-tabs svg { width: 28px; height: 24px; margin-right: 30px; }
.view-tabs .bar { flex: none; width: 2px; height: 26px; margin: 0 34px 0 -5px; background: #888; }
.view-link { line-height: 22px; }
.status { height: 46px; display: flex; align-items: center; margin-left: 4px; padding-left: 8px; background: #323232; color: #aaa; white-space: nowrap; font-weight: 500; }
.panel-ico { width: 25px; height: 25px; margin-right: 11px; }
.list-ico { width: 26px; height: 25px; }
.cplane { width: 146px; margin-left: 35px; }
```
